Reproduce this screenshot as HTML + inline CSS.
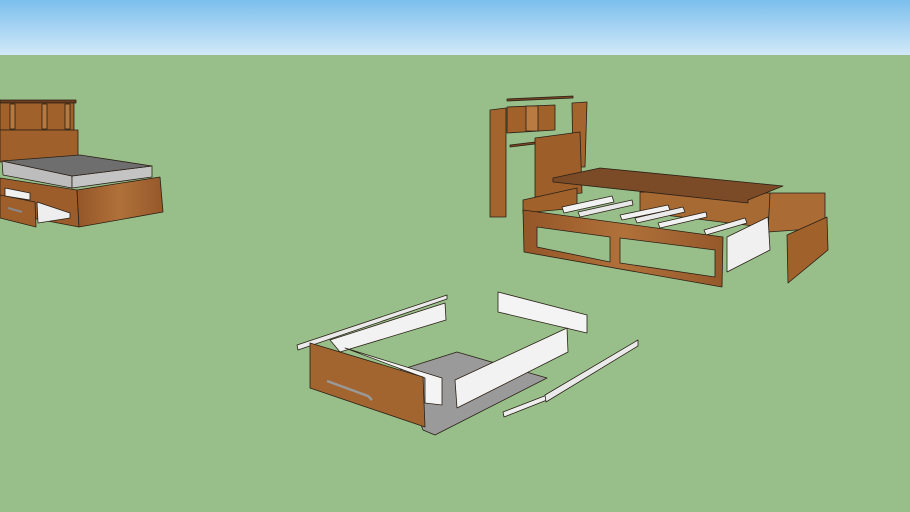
<!DOCTYPE html>
<html><head><style>html,body{margin:0;padding:0;width:910px;height:512px;overflow:hidden}</style></head>
<body>
<svg width="910" height="512" viewBox="0 0 910 512" xmlns="http://www.w3.org/2000/svg">
<defs>
<linearGradient id="sky" x1="0" y1="0" x2="0" y2="1"><stop offset="0" stop-color="#7bbfee"/><stop offset="1" stop-color="#d2e9f8"/></linearGradient>
<linearGradient id="wd" x1="0" y1="0" x2="1" y2="0"><stop offset="0" stop-color="#955628"/><stop offset=".5" stop-color="#b0713a"/><stop offset="1" stop-color="#95582a"/></linearGradient>
</defs>
<rect width="910" height="55" fill="url(#sky)"/>
<rect y="55" width="910" height="457" fill="#98bf8a"/>
<g stroke="#2a2016" stroke-width="0.8" stroke-linejoin="round">
<!-- left bed -->
<rect x="0" y="100" width="76" height="3" fill="#6b3d1c"/>
<rect x="0" y="103" width="74" height="27" fill="#a0612b"/>
<rect x="10" y="104" width="5" height="25" fill="#b57a40"/>
<rect x="42" y="104" width="5" height="25" fill="#b57a40"/>
<rect x="65" y="104" width="5" height="25" fill="#b57a40"/>
<rect x="0" y="130" width="78" height="32" fill="#9f602b"/>
<polygon points="0,178 77,190 79,227 0,212" fill="#9c5d2a"/>
<polygon points="77,190 160,177 163,212 79,227" fill="url(#wd)"/>
<polygon points="2,161 72,176 72,188 3,175" fill="#bdbdbd"/>
<polygon points="72,176 152,166 152,177 72,188" fill="#c4c4c4"/>
<polygon points="2,161 80,155 152,166 72,176" fill="#6e6e6e"/>
<polygon points="37,202 70,213 70,218 38,223" fill="#eeeeee"/>
<polygon points="5,188 30,193 30,200 5,196" fill="#f0f0f0"/>
<polygon points="0,195 35,202 36,227 0,218" fill="#9e5f2b"/>
<line x1="8" y1="208" x2="22" y2="212" stroke="#888" stroke-width="2"/>
<!-- right exploded bed -->
<polygon points="507,99 573,96 573,98 507,101" fill="#7a4520"/>
<polygon points="507,107 555,105 555,130 507,133" fill="#a0612b"/>
<rect x="526" y="106" width="12" height="25" fill="#b87b42"/>
<polygon points="510,145 535,142 535,144 510,147" fill="#7a4520"/>
<polygon points="490,110 506,108 506,217 490,217" fill="#a3642d"/>
<polygon points="572,103 587,102 585,167 573,167" fill="#a3642d"/>
<polygon points="535,138 580,132 582,193 535,197" fill="#9d5e2a"/>
<polygon points="640,192 770,193 770,228 640,212" fill="#a86a33"/>
<polygon points="770,193 825,193 825,228 768,232" fill="#aa6b35"/>
<polygon points="523,200 577,188 577,208 523,213" fill="#a0612b"/>
<polygon points="553,178 600,168 783,186 748,200 748,203 553,182" fill="#7b4a26"/>
<!-- slats -->
<polygon points="562,207 612,196 614,202 564,213" fill="#f2f2f2"/>
<polygon points="578,212 632,200 633,205 580,217" fill="#e8e8e8"/>
<polygon points="620,215 668,205 670,210 622,220" fill="#f2f2f2"/>
<polygon points="635,218 683,207 685,212 637,223" fill="#eaeaea"/>
<polygon points="658,223 706,212 707,217 660,228" fill="#f2f2f2"/>
<polygon points="704,230 745,218 747,223 706,235" fill="#eeeeee"/>
<polygon points="561,228 570,226 572,250 561,248" fill="#eeeeee"/>
<polygon points="634,238 646,236 646,258 634,256" fill="#eeeeee"/>
<polygon points="523,210 723,237 722,287 524,252" fill="url(#wd)"/>
<polygon points="537,227 610,237 610,262 537,247" fill="#98bf8a"/>
<polygon points="620,238 715,250 715,277 620,263" fill="#98bf8a"/>
<polygon points="727,237 768,217 770,250 727,272" fill="#f0f0f0"/>
<polygon points="787,235 827,217 828,250 788,283" fill="#a0612b"/>
<!-- drawer -->
<polygon points="400,370 457,352 547,378 435,435 423,430" fill="#9a9a9a"/>
<polygon points="498,292 587,315 587,333 498,312" fill="#f4f4f4"/>
<polygon points="330,340 445,303 446,320 340,352" fill="#f2f2f2"/>
<polygon points="297,345 447,295 447,299 298,350" fill="#eaeaea"/>
<polygon points="345,348 442,378 442,405 425,403 425,378" fill="#f4f4f4"/>
<polygon points="455,380 567,328 568,352 457,408" fill="#f2f2f2"/>
<polygon points="310,343 423,377 425,427 310,388" fill="#a3652f"/>
<polyline points="327,381 368,396 372,400" fill="none" stroke="#999" stroke-width="2.5"/>
<polygon points="503,412 547,395 547,400 504,417" fill="#eeeeee"/>
<polygon points="545,395 638,340 638,346 546,402" fill="#eaeaea"/>
</g>
</svg>
</body></html>
